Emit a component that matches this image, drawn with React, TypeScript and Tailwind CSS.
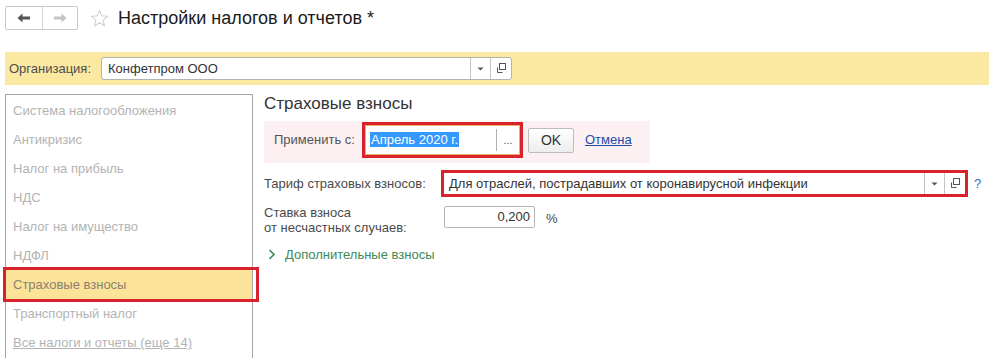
import React from "react";

const sideItems = [
  "Система налогообложения",
  "Антикризис",
  "Налог на прибыль",
  "НДС",
  "Налог на имущество",
  "НДФЛ",
  "Страховые взносы",
  "Транспортный налог",
];

function OpenIcon() {
  return (
    <svg width="11" height="11" viewBox="0 0 11 11" fill="none" stroke="#555" strokeWidth="1">
      <rect x="3.5" y="0.5" width="6" height="6" />
      <path d="M1.5 4.5 V9.5 H6.5" />
    </svg>
  );
}

function DropIcon() {
  return (
    <svg width="7" height="4" viewBox="0 0 7 4">
      <path d="M0.5 0.5 H6.5 L3.5 3.5 Z" fill="#555" />
    </svg>
  );
}

function ComboButtons({ h }: { h: string }) {
  return (
    <>
      <span className={`flex ${h} w-[20px] items-center justify-center border-l border-[#c4c4c4]`}>
        <DropIcon />
      </span>
      <span className={`flex ${h} w-[21px] items-center justify-center border-l border-[#c4c4c4]`}>
        <OpenIcon />
      </span>
    </>
  );
}

export default function App() {
  return (
    <div className="h-[358px] w-[989px] overflow-hidden bg-white font-['Liberation_Sans',Arial,sans-serif] text-[13px] text-[#4a4a4a]">
      {/* header */}
      <div className="flex items-center pl-[5px] pt-[6px]">
        <div className="flex h-[24px] rounded-[2px] border border-[#c9c9c9]">
          <span className="flex w-[36px] items-center justify-center">
            <svg width="14" height="10" viewBox="0 0 14 10">
              <path d="M0.5 5 L5.5 0.5 V3.5 H13 V6.5 H5.5 V9.5 Z" fill="#555" />
            </svg>
          </span>
          <span className="flex w-[35px] items-center justify-center border-l border-[#d4d4d4]">
            <svg width="14" height="10" viewBox="0 0 14 10">
              <path d="M13.5 5 L8.5 0.5 V3.5 H1 V6.5 H8.5 V9.5 Z" fill="#c4c4c4" />
            </svg>
          </span>
        </div>
        <svg className="ml-[12px]" width="19" height="19" viewBox="0 0 24 24" fill="none" stroke="#cfcfcf" strokeWidth="1.3">
          <path d="M12 2 L14.9 8.6 L22 9.3 L16.6 14 L18.2 21 L12 17.3 L5.8 21 L7.4 14 L2 9.3 L9.1 8.6 Z" />
        </svg>
        <h1 className="ml-[9px] text-[18px] leading-[24px] text-[#1a1a1a]">Настройки налогов и отчетов *</h1>
      </div>

      {/* organization bar */}
      <div className="ml-[5px] mt-[22px] flex h-[33px] items-center bg-[#fbe9a2] pl-[4px]">
        <span className="w-[92px] text-[#4d4d4d]">Организация:</span>
        <div className="flex h-[23px] w-[411px] items-center rounded-[3px] border border-[#b3b3b3] bg-white">
          <span className="flex-1 pl-[6px] text-[#333]">Конфетпром ООО</span>
          <ComboButtons h="h-[21px]" />
        </div>
      </div>

      {/* body */}
      <div className="mt-[9px] flex">
        <div className="ml-[5px] h-[280px] w-[248px] border-l border-r border-t border-[#a6a6a6] pt-[1px]">
          {sideItems.map((item) =>
            item === "Страховые взносы" ? (
              <div key={item} className="relative flex h-[29px] items-center bg-[#fbe49a] pl-[7px] text-[#8c8070]">
                {item}
                <span className="absolute -bottom-[3px] -left-[3px] -right-[7px] -top-[3px] border-[3px] border-[#d8222c]" />
              </div>
            ) : (
              <div key={item} className="flex h-[29px] items-center pl-[7px] text-[#b3b3b3]">
                {item}
              </div>
            )
          )}
          <div className="flex h-[29px] items-center pl-[7px] text-[#b3b3b3]">
            <span className="underline decoration-[#b3b3b3]">Все налоги и отчеты (еще 14)</span>
          </div>
        </div>

        <div className="flex-1 pl-[11px]">
          <h2 className="text-[17px] leading-[20px] text-[#333]">Страховые взносы</h2>

          {/* apply from */}
          <div className="mt-[7px] flex h-[42px] w-[386px] items-start bg-[#fcf0f2] pl-[10px] pt-[1px]">
            <div className="flex h-[36px] items-center">
              <span className="w-[88px] text-[#555]">Применить с:</span>
              <div className="flex h-[36px] w-[161px] border-[3px] border-[#d8222c]">
                <div className="flex h-[30px] flex-1 items-center border border-[#eab45c] bg-white">
                  <span className="flex-1 pl-[4px]">
                    <span className="bg-[#3399ff] px-[1px] text-white">Апрель 2020 г.</span>
                  </span>
                  <span className="flex h-[22px] w-[23px] items-center justify-center border-l border-[#b0b0b0] text-[11px] text-[#555]">
                    ...
                  </span>
                </div>
              </div>
              <button className="ml-[5px] flex h-[25px] w-[46px] items-center justify-center rounded-[2px] border border-[#bcbcbc] bg-gradient-to-b from-white to-[#ededed] text-[14px] text-[#333]">
                OK
              </button>
              <a className="ml-[11px] text-[#1d4ea5] underline">Отмена</a>
            </div>
          </div>

          {/* tariff */}
          <div className="mt-[7px] flex h-[27px] items-center">
            <span className="w-[177px] text-[#4a4a4a]">Тариф страховых взносов:</span>
            <div className="flex h-[27px] w-[527px] border-[3px] border-[#d8222c]">
              <div className="flex h-[21px] flex-1 items-center bg-white">
                <span className="flex-1 pl-[5px] text-[#333]">
                  Для отраслей, пострадавших от коронавирусной инфекции
                </span>
                <ComboButtons h="h-[21px]" />
              </div>
            </div>
            <span className="ml-[6px] text-[#2b6fc4]">?</span>
          </div>

          {/* rate */}
          <div className="mt-[8px] flex items-start">
            <span className="w-[180px] leading-[15px] text-[#4a4a4a]">
              Ставка взноса
              <br />
              от несчастных случаев:
            </span>
            <div className="mt-[1px] flex h-[22px] w-[91px] items-center justify-end rounded-[2px] border border-[#b5b5b5] pr-[4px] text-[#333]">
              0,200
            </div>
            <span className="ml-[11px] mt-[4px]">%</span>
          </div>

          {/* additional */}
          <div className="mt-[10px] flex items-center text-[#3b8a57]">
            <svg className="ml-[4px]" width="8" height="11" viewBox="0 0 8 11" fill="none" stroke="#3b8a57" strokeWidth="1.6">
              <path d="M1.5 1 L6 5.5 L1.5 10" />
            </svg>
            <span className="ml-[9px]">Дополнительные взносы</span>
          </div>
        </div>
      </div>
    </div>
  );
}
